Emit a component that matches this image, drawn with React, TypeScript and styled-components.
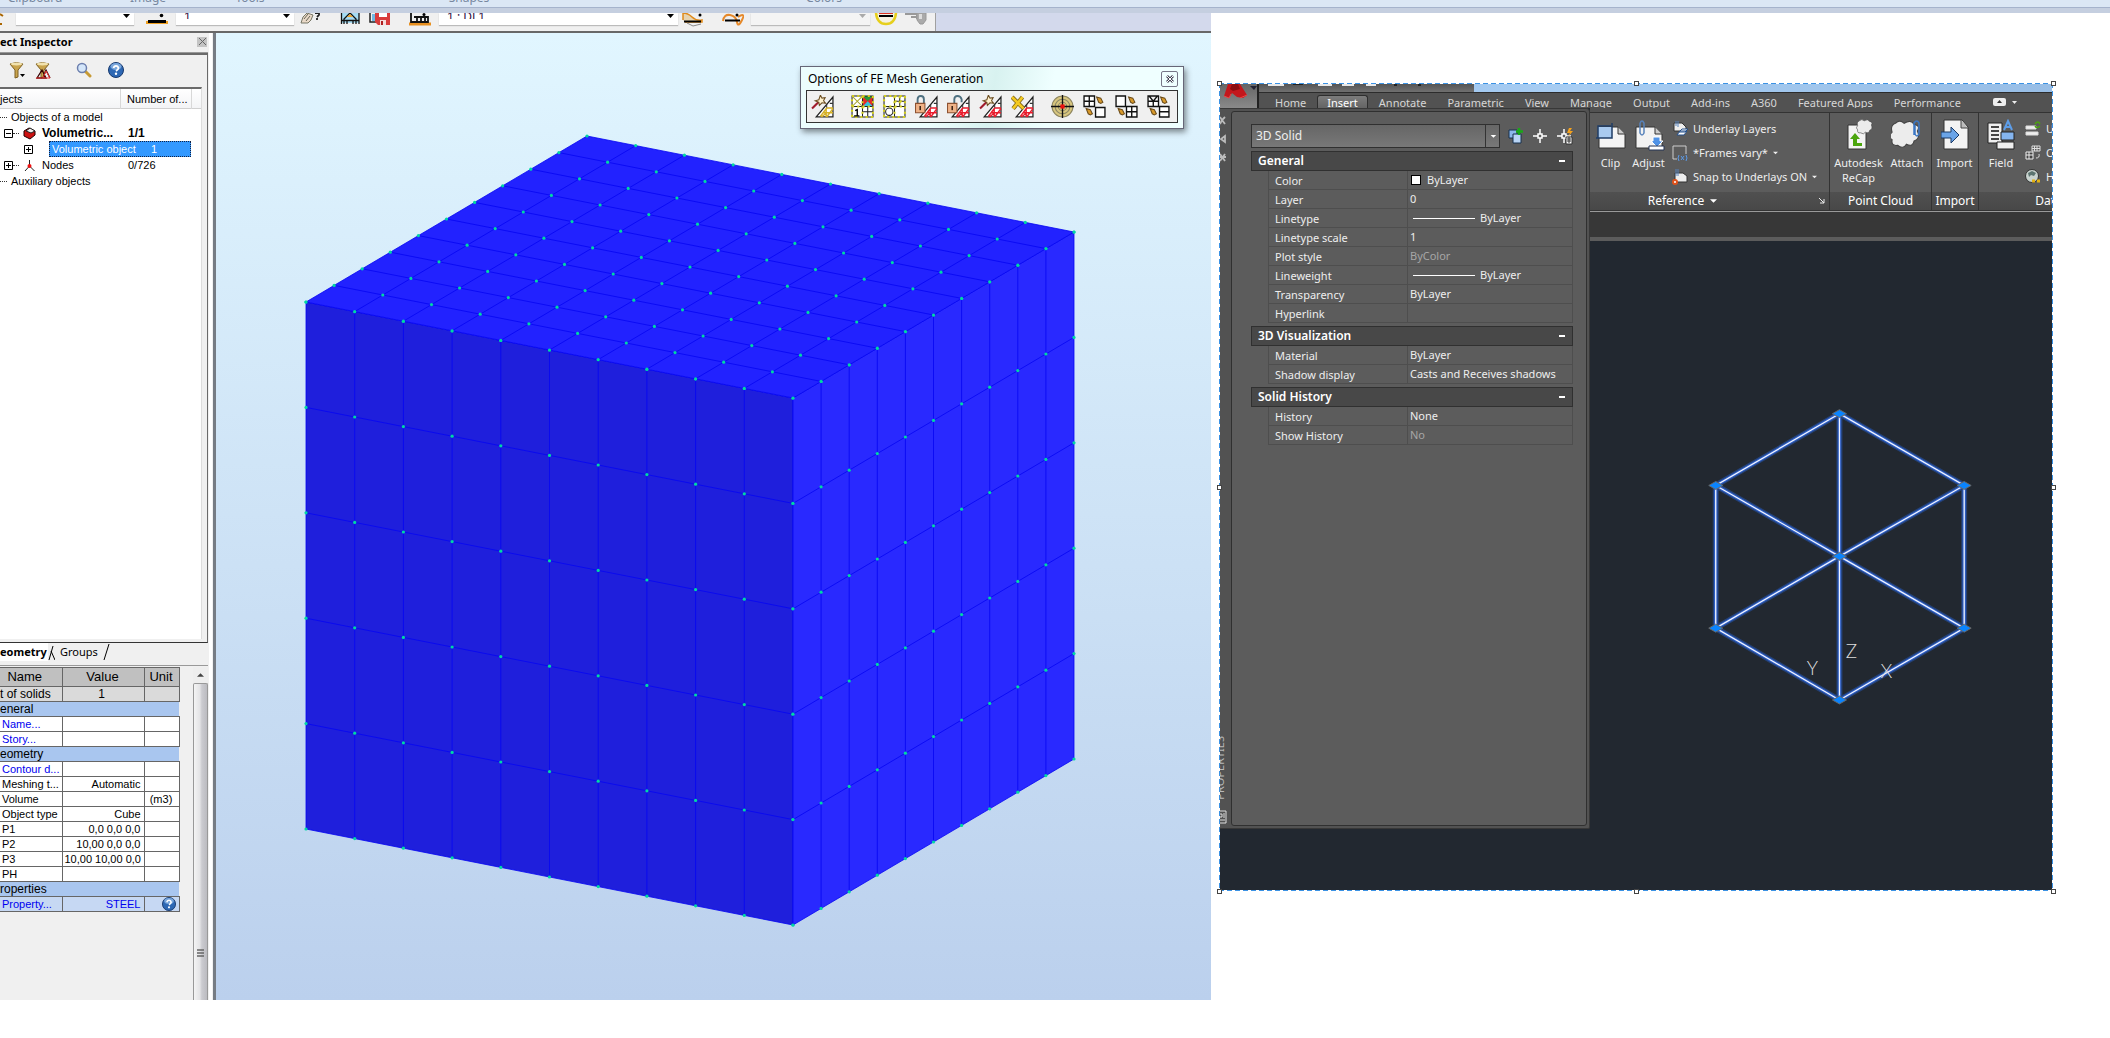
import React from "react";
import styled, { createGlobalStyle, css } from "styled-components";

const ui = `"Noto Sans", "Open Sans", sans-serif`;
const arial = `"Liberation Sans", Arial, sans-serif`;

const GlobalStyle = createGlobalStyle`
  * { box-sizing: border-box; }
  body { margin: 0; background: #fff; font: 11px/16px ${ui}; color: #000; }
  button, select, input { font: inherit; color: inherit; margin: 0; padding: 0; border: 0; background: none; }
  svg { display: block; flex: none; }
`;

const Page = styled.div`
  display: flex;
  flex-direction: column;
  height: 100vh;
  overflow: hidden;
`;

/* ---------- paint ribbon remains ---------- */
const PaintStrip = styled.header`
  display: flex;
  flex: none;
  align-items: flex-end;
  height: 13px;
  overflow: hidden;
  background: linear-gradient(#dbe7f5 0 7px, #a5b3cc 7px 8px, #c5cfe0 8px 13px);
`;
const PaintLabel = styled.span<{ $w: number }>`
  width: ${(p) => p.$w}px;
  padding-bottom: 7px;
  text-align: center;
  color: #7787a0;
  font-size: 12px;
`;

const Workspace = styled.main`
  display: grid;
  grid-template-columns: 1211fr 899fr;
  flex: 1;
  min-height: 0;
`;

/* ---------- structural window ---------- */
const RobotWindow = styled.section`
  display: flex;
  flex-direction: column;
  min-width: 0;
  margin-bottom: 38px;
  background: #f0f0f0;
`;
const LoadBar = styled.div`
  display: flex;
  align-items: flex-start;
  flex: none;
  height: 20px;
  overflow: hidden;
  border-bottom: 2px solid #686868;
  background: #f0f0f0;
`;
const LoadFiller = styled.div`
  flex: 1;
  height: 100%;
  border-left: 1px solid #a0a0a0;
  background: #d3d9ec;
`;
const Spacer = styled.span<{ $w: number }>`
  flex: none;
  width: ${(p) => p.$w}px;
`;
const ComboWrap = styled.div<{ $w: number; $off?: boolean }>`
  display: flex;
  flex: none;
  align-items: flex-end;
  width: ${(p) => p.$w}px;
  height: 12px;
  overflow: hidden;
  background: ${(p) => (p.$off ? "#f4f4f4" : "#fff")};
  box-shadow: 0 1px 1px #bbb;
  select {
    flex: 1;
    height: 16px;
    padding-left: 8px;
    padding-bottom: 6px;
    line-height: 16px;
    font-size: 12px;
    appearance: none;
    overflow: visible;
    color: ${(p) => (p.$off ? "#aaa" : "#301040")};
  }
`;
const RobotBody = styled.div`
  display: flex;
  flex: 1;
  min-height: 0;
`;
const SidePane = styled.aside`
  display: flex;
  flex-direction: column;
  flex: none;
  width: 213px;
  padding-right: 5px;
  background: linear-gradient(90deg, #f0f0f0 209px, #fff 209px 212px, #f0f0f0 212px);
`;
const PaneTitle = styled.div`
  display: flex;
  align-items: center;
  justify-content: space-between;
  flex: none;
  height: 20px;
  padding-right: 1px;
  padding-bottom: 2px;
  border-bottom: 1px solid #999;
  font-weight: 700;
`;
const PaneClose = styled.button`
  display: grid;
  place-items: center;
  width: 10px;
  height: 10px;
  background: #c4c4c4;
`;
const TreeFrame = styled.div`
  display: flex;
  flex-direction: column;
  flex: none;
  height: 590px;
  padding-right: 5px;
  border-top: 2px solid #6a6a6a;
  border-right: 1px solid #6a6a6a;
  border-bottom: 1px solid #333;
`;
const FilterBar = styled.div`
  display: flex;
  align-items: center;
  flex: none;
  height: 32px;
  padding-left: 9px;
  padding-bottom: 2px;
`;
const IconButton = styled.button<{ $w: number }>`
  display: block;
  flex: none;
  width: ${(p) => p.$w}px;
`;
const Tree = styled.div`
  flex: 1;
  margin-bottom: 3px;
  border-top: 2px solid #6a6a6a;
  border-right: 1px solid #ddd;
  background: #fff;
  font: 12px/16px ${arial};
`;
const TreeHead = styled.div`
  display: grid;
  grid-template-columns: 121px 71px 1fr;
  height: 20px;
  border-bottom: 1px solid #d0d0d0;
  background: linear-gradient(#fff, #f3f4f6);
  line-height: 20px;
  white-space: nowrap;
  font-size: 11px;
  span { border-right: 1px solid #d8d8d8; }
  span + span { padding-left: 6px; }
  span:last-child { border: 0; }
`;
const TreeRow = styled.div<{ $bold?: boolean }>`
  display: grid;
  grid-template-columns: 128px 1fr;
  height: 16px;
  line-height: 16px;
  font-size: ${(p) => (p.$bold ? 12 : 11)}px;
  font-weight: ${(p) => (p.$bold ? 700 : 400)};
`;
const TreeCell = styled.span`
  display: flex;
  align-items: center;
  white-space: nowrap;
`;
const Dots = styled.i<{ $w: number }>`
  flex: none;
  width: ${(p) => p.$w}px;
  margin-right: 4px;
  border-top: 1px dotted #333;
`;
const TreePicked = styled.div`
  display: grid;
  grid-template-columns: 24px 25px 142px;
  align-items: center;
  height: 16px;
  font-size: 11px;
`;
const Picked = styled.span`
  display: grid;
  grid-template-columns: 99px 1fr;
  padding-left: 2px;
  border: 1px dotted #124;
  background: #3399ff;
  color: #fff;
  line-height: 14px;
  white-space: nowrap;
`;
const PaneTabs = styled.div`
  display: flex;
  flex: none;
  align-items: center;
  height: 23px;
  padding-bottom: 4px;
  border-bottom: 1px solid #999;
  button { line-height: 18px; }
  button:first-child { width: 48px; padding-right: 4px; font-weight: 700; text-align: left; background: #fff; white-space: nowrap; }
  button:last-of-type { padding: 0 5px; }
`;
const PropsArea = styled.div`
  display: flex;
  flex: 1;
  min-height: 0;
  padding-top: 1px;
  justify-content: space-between;
`;
type Kind = "plain" | "link" | "pick" | "count";
const PropsTable = styled.table`
  align-self: flex-start;
  width: 179px;
  border-collapse: collapse;
  table-layout: fixed;
  font: 11px/14px ${arial};
  td, th { height: 15px; padding: 0 3px 0 2px; border: 1px solid #666; border-left: 0; white-space: nowrap; overflow: hidden; }
  th { height: 19px; background: #c0c0c0; font-size: 13px; font-weight: 400; }
  th:first-child { padding-right: 14px; }
`;
const PropsRow = styled.tr<{ $kind: Kind }>`
  background: ${(p) => (p.$kind === "pick" ? "#c6d8f3" : p.$kind === "count" ? "#dadada" : "#fff")};
  color: ${(p) => (p.$kind === "link" || p.$kind === "pick" ? "#0000f0" : "#000")};
  td:nth-child(2) { text-align: right; }
  td:nth-child(3) { text-align: center; }
  td svg { margin-left: auto; }
  ${(p) => p.$kind === "count" && css`td { font-size: 12px; padding-left: 0; } td:nth-child(2) { text-align: center; }`}
`;
const BandCell = styled.td`
  && { padding-left: 0; border-right: 0; background: #a9c6ef; font-size: 12px; text-align: left; }
`;
const Scroll = styled.div`
  display: flex;
  flex-direction: column;
  width: 15px;
  background: #eee;
`;
const ScrollUp = styled.button`
  display: grid;
  place-items: center;
  height: 16px;
`;
const Thumb = styled.div`
  display: flex;
  flex: 1;
  align-items: center;
  justify-content: center;
  padding-top: 222px;
  border: solid #999;
  border-width: 1px 1px 0;
  border-radius: 2px 2px 0 0;
  background: linear-gradient(90deg, #f4f4f4, #e4e4e6 45%, #cbcbd0 60%, #bbbbc0);
`;

const Viewport = styled.div`
  position: relative;
  flex: 1;
  min-width: 0;
  border-left: 3px solid #767c84;
  background: linear-gradient(#e1f6ff, #ddf2fd 10%, #bbd0ed);
  > svg { width: 100%; height: 100%; }
`;
const MeshPanel = styled.div`
  position: absolute;
  top: 33px;
  right: 27px;
  width: 384px;
  height: 63px;
  padding: 0 5px;
  border: 1px solid #667;
  background: linear-gradient(100deg, #ecfdfd 35%, #d8f2f0 50%, #efffff 65%);
  box-shadow: 2px 3px 6px rgba(0, 0, 0, 0.45);
`;
const MeshTitle = styled.div`
  display: flex;
  align-items: center;
  justify-content: space-between;
  height: 23px;
  padding-left: 2px;
  font-size: 12px;
  button { display: grid; place-items: center; width: 17px; height: 16px; border: 1px solid #778; border-radius: 2px; }
`;
const MeshTools = styled.div`
  display: flex;
  align-items: center;
  gap: 8px;
  height: 33px;
  padding-left: 4px;
  border: 1px solid #333;
  background: #f0f0f0;
  button { width: 24px; }
  button.gap { margin-left: 8px; }
`;

/* ---------- drafting window ---------- */
const Selection = styled.section`
  position: relative;
  display: flex;
  margin: 70px 57px 147px 8px;
  padding: 1px;
  min-width: 0;
  background:
    repeating-linear-gradient(90deg, #3b92e4 0 5px, #fff 5px 8px) top / 100% 1px no-repeat,
    repeating-linear-gradient(90deg, #3b92e4 0 5px, #fff 5px 8px) bottom / 100% 1px no-repeat,
    repeating-linear-gradient(#3b92e4 0 5px, #fff 5px 8px) left / 1px 100% no-repeat,
    repeating-linear-gradient(#3b92e4 0 5px, #fff 5px 8px) right / 1px 100% no-repeat;
`;
const Grip = styled.i<{ $x: number; $y: number }>`
  position: absolute;
  z-index: 3;
  left: ${(p) => p.$x}%;
  top: ${(p) => p.$y}%;
  width: 5px;
  height: 5px;
  margin: -2px;
  border: 1px solid #444;
  background: #fff;
`;
const CadWindow = styled.div`
  display: grid;
  grid-template: "top top" auto "palette draw" 1fr / 370px 1fr;
  flex: 1;
  min-width: 0;
  overflow: hidden;
  background: #222830;
  color: #eee;
`;
const CadTop = styled.div`
  grid-area: top;
  display: flex;
  height: 24px;
  background: #525252;
`;
const AppButton = styled.button`
  display: flex;
  flex: none;
  align-items: flex-start;
  width: 39px;
  height: 24px;
  border-right: 2px solid #222;
  background: linear-gradient(#666, #8a8a8a);
`;
const CadTopRight = styled.div`
  display: flex;
  flex-direction: column;
  flex: 1;
  min-width: 0;
`;
const TitleStrip = styled.div`
  display: flex;
  flex: none;
  height: 9px;
  overflow: hidden;
  border-bottom: 1px solid #2c2c2c;
  background: linear-gradient(90deg, #9bc3ee, #a8cdf2 40%, #98bee6);
`;
const QuickBar = styled.div`
  display: flex;
  align-items: flex-start;
  width: 215px;
  padding-left: 9px;
  background: linear-gradient(#555, #707070);
`;
const Tabs = styled.nav`
  display: flex;
  align-items: flex-end;
  gap: 1px;
  height: 15px;
  padding-left: 6px;
`;
const Tab = styled.button<{ $on?: boolean }>`
  flex: none;
  height: 13px;
  padding: 0 9px;
  border: solid ${(p) => (p.$on ? "#2e2e2e" : "transparent")};
  border-width: 1px 1px 0;
  border-radius: 3px 3px 0 0;
  background: ${(p) => (p.$on ? "linear-gradient(#7c7c7c, #646464)" : "none")};
  color: ${(p) => (p.$on ? "#fff" : "#d6d6d6")};
  line-height: 14px;
`;

const Palette = styled.aside`
  grid-area: palette;
  display: flex;
  align-self: start;
  height: 721px;
  padding: 2px 2px 2px 0;
  border: solid #383838;
  border-width: 1px 1px 1px 0;
  border-radius: 0 4px 2px 0;
  background: #525252;
`;
const Rail = styled.div`
  display: flex;
  flex-direction: column;
  flex: none;
  width: 11px;
  overflow: hidden;
  color: #ccc;
`;
const RailText = styled.span`
  margin-top: auto;
  margin-bottom: 10px;
  width: 0;
  line-height: 0;
  writing-mode: vertical-rl;
  transform: rotate(180deg);
  font-size: 11px;
  color: #b8b8b8;
`;
const PaletteBody = styled.div`
  flex: 1;
  padding: 12px 13px 0 19px;
  border: 1px solid #303030;
  border-radius: 3px;
  background: #5c5c5c;
`;
const Picker = styled.div`
  display: flex;
  align-items: center;
  margin-bottom: 3px;
`;
const PickerBox = styled.label`
  display: flex;
  align-items: center;
  flex: 1;
  height: 24px;
  margin-right: 8px;
  border: 1px solid #303030;
  background: linear-gradient(#666, #787878);
  select { flex: 1; height: 22px; padding-left: 4px; appearance: none; font-size: 12px; }
  svg { width: 14px; height: 22px; border-left: 1px solid #333; }
`;
const GroupHead = styled.h3`
  display: flex;
  align-items: center;
  justify-content: space-between;
  height: 20px;
  margin: 0;
  padding: 0 7px 0 6px;
  border: 1px solid #303030;
  background: #484848;
  font-size: 12px;
  font-weight: 600;
  color: #fff;
  button { width: 6px; height: 2px; background: #fff; }
`;
const Fields = styled.dl`
  display: grid;
  grid-template-columns: 139px 1fr;
  margin: 0 0 3px 17px;
  dt, dd { display: flex; align-items: center; height: 19px; margin: 0; border: solid #4e4e4e; border-width: 0 0 1px 1px; white-space: nowrap; }
  dt { padding-left: 6px; padding-top: 1px; }
  dd { padding-left: 2px; border-right-width: 1px; }
`;
const Muted = styled.span`
  color: #a6a6a6;
`;
const Swatch = styled.i`
  width: 10px;
  height: 10px;
  margin: 0 6px 0 1px;
  border: 1px solid #000;
  background: #fff;
`;
const Stroke = styled.i`
  width: 62px;
  height: 1px;
  margin: 0 5px 0 3px;
  background: #fff;
`;

const DrawColumn = styled.div`
  grid-area: draw;
  display: flex;
  flex-direction: column;
  min-width: 0;
`;
const Ribbon = styled.div`
  display: flex;
  flex: none;
  height: 104px;
  padding-top: 4px;
  overflow: hidden;
  border-bottom: 1px solid #999;
  background: #525252;
`;
const RibbonPanel = styled.section<{ $w: number }>`
  display: flex;
  flex-direction: column;
  flex: none;
  width: ${(p) => p.$w}px;
  border: solid #333;
  border-width: 1px 1px 1px 0;
  background: #5c5c5c;
`;
const PanelBody = styled.div`
  display: flex;
  flex: 1;
  padding: 6px 2px 0 2px;
`;
const PanelFoot = styled.footer`
  display: flex;
  align-items: center;
  justify-content: center;
  height: 18px;
  padding-right: 4px;
  background: linear-gradient(#505050, #484848);
  font-size: 12px;
  color: #fff;
  white-space: nowrap;
`;
const PlainFoot = styled(PanelFoot)`
  padding: 0;
`;
const FootTitle = styled.span`
  display: flex;
  flex: 1;
  align-items: center;
  justify-content: center;
  gap: 6px;
  padding-right: 44px;
`;
const BigTool = styled.button<{ $w: number }>`
  display: flex;
  flex-direction: column;
  align-items: center;
  flex: none;
  width: ${(p) => p.$w}px;
  line-height: 15px;
  svg { margin-bottom: 4px; }
`;
const SmallTools = styled.div`
  display: flex;
  flex-direction: column;
  gap: 8px;
  padding: 2px 0 0 4px;
`;
const SmallTool = styled.button`
  display: flex;
  align-items: center;
  gap: 5px;
  height: 16px;
  white-space: nowrap;
`;
const FileTabs = styled.div`
  flex: none;
  height: 29px;
  border-bottom: 4px solid #5c5c5c;
  background: #373737;
`;
const Drawing = styled.div`
  flex: 1;
  min-height: 0;
  svg { width: 100%; height: 100%; }
`;

/* ---------- icons ---------- */
const Caret = ({ c = "#000", w = 7 }: { c?: string; w?: number }) => (
  <svg width={w} height="4" viewBox="0 0 8 4"><path d="M0 0h8L4 4z" fill={c} /></svg>
);
const Funnel = ({ mesh }: { mesh?: boolean }) => (
  <svg width="16" height="17" viewBox="0 0 16 17">
    <path d="M1 2q6-3 13 0L9 8v7l-3 1V8z" fill="#c9a44d" stroke="#7d5f22" />
    <ellipse cx="7.500" cy="2" rx="6" ry="1.500" fill="#f1e2ae" />
    {mesh ? <path d="M2 16l5-8 4 8zM8 16l3-8 4 8" fill="none" stroke="#300" strokeWidth="1.300" /> : <path d="M11 12h5l-2.500 3z" />}
    {mesh && <path d="M8 16l3-7 4 7M1 16h14" fill="none" stroke="#e33" />}
  </svg>
);
const Help = ({ s = 16 }: { s?: number }) => (
  <svg width={s} height={s} viewBox="0 0 16 16">
    <circle cx="8" cy="8" r="7.500" fill="#2e68b4" stroke="#17386c" />
    <ellipse cx="8" cy="4.500" rx="5.500" ry="3.500" fill="#7aa7dc" />
    <path d="M5.500 6Q6 3.800 8 3.800T10.500 6Q10.500 7.300 8 9" fill="none" stroke="#fff" strokeWidth="1.800" />
    <circle cx="8" cy="11.800" r="1.200" fill="#fff" />
  </svg>
);
const Magnifier = () => (
  <svg width="16" height="16" viewBox="0 0 16 16">
    <path d="M9 9l5 5" stroke="#c79a35" strokeWidth="3" strokeLinecap="round" />
    <circle cx="6" cy="6" r="4.500" fill="#d4e6fa" stroke="#6c7fae" strokeWidth="1.500" />
  </svg>
);
const Expander = ({ plus }: { plus?: boolean }) => (
  <svg width="9" height="9" viewBox="0 0 9 9">
    <path d={plus ? "M.5.5h8v8h-8zM2 4.500h5M4.500 2v5" : "M.5.5h8v8h-8zM2 4.500h5"} fill="#fff" stroke="#000" />
  </svg>
);
const Beam = ({ kind }: { kind: string }) => (
  <svg width="22" height="14" viewBox="0 0 22 14">
    {kind === "bar" && <><path d="M0 9.500h22" stroke="#f0a020" strokeWidth="3" /><path d="M2 8.500h18" stroke="#000" strokeWidth="3" /><circle cx="15.500" cy="2.500" r="1.800" /></>}
    {kind === "hand" && <><path d="M1 10L3 4l4-4 3 1 3 1-2 5-3 3z" fill="#ead9c8" stroke="#776" /><path d="M4 6l4-5M6 8l4-5" stroke="#665" /><path d="M15 0h4v2l-2 2M17 5v2" stroke="#222" strokeWidth="1.800" fill="none" /></>}
    {kind === "node" && <><path d="M2 0h18v10H2z" fill="#a5dbf3" /><path d="M2.500 0v11M20 0v11M5 11V6l6-6 6 6v5M2 7.500h18M8 11V8M14 11V8" stroke="#111" strokeWidth="1.300" fill="none" /><path d="M8 4l3-3 3 3z" fill="#f3a52b" /></>}
    {kind === "save" && <><path d="M1 0v9h6V0" fill="none" stroke="#222" strokeWidth="1.500" /><path d="M3 1h3v7H3z" fill="#6fb8e4" /><path d="M6 0h15v12H9L6 9z" fill="#d93c3c" /><path d="M10 0h8v4h-8z" fill="#fff" /><path d="M11 7h6v5h-6z" fill="#f3dcdc" /><path d="M12 8h2v4h-2z" fill="#b02020" /></>}
    {kind === "load" && <><path d="M0 11h22" stroke="#e89020" strokeWidth="3" /><path d="M2 0v9h17V4H5M8 4v5M12 4v5M16 4v5" stroke="#111" strokeWidth="1.800" fill="none" /><circle cx="15" cy="1.500" r="1.500" /></>}
    {kind === "curveA" && <><path d="M1 7V0Q6 0 10 4t10 3v2H3" fill="#e6d3b0" stroke="#e08a1a" strokeWidth="1.500" /><path d="M2 8.500h17" stroke="#000" strokeWidth="2" /><path d="M5 10l6 3 8-2" stroke="#888" fill="none" /><circle cx="18" cy="2" r="1.500" /></>}
    {kind === "curveB" && <><path d="M1 8Q2 1 8 2t7 7 5-2-4-3" fill="none" stroke="#e6892a" strokeWidth="2" /><path d="M3 7.500h15" stroke="#000" strokeWidth="2" /><circle cx="15" cy="2" r="1.500" /></>}
  </svg>
);
const Ring = () => (
  <svg width="24" height="14" viewBox="0 0 24 14">
    <path d="M2 0Q3 11 12 11T22 0" fill="#f5f1e0" stroke="#e6cf1c" strokeWidth="2.500" /><path d="M5 0h14" stroke="#d32" strokeWidth="2" /><path d="M5 3h14" stroke="#000" strokeWidth="2" />
  </svg>
);
const Plug = () => (
  <svg width="24" height="14" viewBox="0 0 24 14"><path d="M0 1h12v3H6M12 0v6" fill="none" stroke="#999" strokeWidth="2" /><path d="M12 0h9v7l-3 4h-3l-3-4z" fill="#aaa" stroke="#999" /><path d="M14 1h3v5h-3z" fill="#ddd" /></svg>
);

const Tri = ({ c }: { c: string }) => (
  <g fill="none">
    <path d="M5 21L21 2V21z" fill="#fff" stroke="#222" strokeWidth="1.200" />
    <path d="M9 20.500l6-8h6M14.500 13v8M12 17h9M15 21l6-8M10 21l5-4" stroke={c} strokeWidth="1.400" />
    <path d="M15 12V9M18 8h3" stroke="#333" />
  </g>
);
const Wand = () => (
  <g><path d="M1 13l7-7" stroke="#a11c2c" strokeWidth="2" /><path d="M9 0l1.500 3 3-.5-1.500 3 2 2.500-3.500-.5L8 10l-.5-3L4 5.500l3.500-1z" fill="#fff2cf" stroke="#6b4d21" /></g>
);
const Lock = ({ open }: { open?: boolean }) => (
  <g><path d={open ? "M7 8V4Q7 1 10 1t4 3v3" : "M2.500 8V4Q2.500 1 5.500 1T8.500 4v4"} fill="none" stroke="#4e7080" strokeWidth="1.800" /><path d="M.5 8h9v9h-9z" fill="#efb287" stroke="#8d5130" /><path d="M5 10.500v4" stroke="#3d2414" strokeWidth="1.500" /></g>
);
const Arrows = () => (
  <g fill="#d99a2b" stroke="#694a18"><path d="M13 2l4 1 2 4-2 1-2-1z" /><path d="M3 13l4 1 2 4-2 1-2-1z" /></g>
);
const MeshIcon = ({ kind }: { kind: string }) => (
  <svg width="23" height="23" viewBox="0 0 22 22">
    {kind === "wand" && <><Tri c="#d6b126" /><Wand /></>}
    {kind === "wandRed" && <><Tri c="#e81c2c" /><Wand /></>}
    {kind === "lock" && <><Tri c="#e81c2c" /><Lock /></>}
    {kind === "unlock" && <><Tri c="#e81c2c" /><Lock open /></>}
    {kind === "cross" && <><Tri c="#e81c2c" /><path d="M1 2l11 11M11 2L2 13" stroke="#80671a" strokeWidth="4" /><path d="M1 2l11 11M11 2L2 13" stroke="#f4c91f" strokeWidth="2.500" /></>}
    {kind === "quad" && <><path d="M1 1h20v20H1z" fill="#fff" /><path d="M11 1h10v10H11z" fill="#e42a2a" /><path d="M11 1h10l-5 5z" fill="#239a3b" /><path d="M16 6l5 5H11z" fill="#35c3dd" /><path d="M1 1h20v20H1zM11 1v20M1 11h20M16 11v10M11 16h10" fill="none" stroke="#222" /><path d="M1 1l10 10M11 1L1 11" stroke="#a8a32a" /><path d="M1 1h20v20H1zM1 11h20M11 1v20" fill="none" stroke="#d4cf1e" strokeWidth="2" strokeDasharray="2 3" /><path d="M4 15l2-1v6M3 20h5" fill="none" stroke="#000" strokeWidth="1.300" /></>}
    {kind === "quadEmpty" && <><path d="M1 1h20v20H1z" fill="#fff" /><path d="M1 1h20v20H1zM11 1v20M1 11h20M16 1v10M11 6h10" fill="none" stroke="#222" /><circle cx="6" cy="16" r="3.500" fill="none" stroke="#222" /><path d="M1 11V1h20v20H1V11h20M11 1v20M16 1v10M11 6h10" fill="none" stroke="#d4cf1e" strokeWidth="2" strokeDasharray="2 3" /></>}
    {kind === "target" && <><circle cx="11" cy="11" r="10" fill="#d8c67e" stroke="#8d8560" /><circle cx="11" cy="11" r="7" fill="none" stroke="#8b8768" /><circle cx="11" cy="11" r="4" fill="none" stroke="#8b8768" /><path d="M11 0v22M0 11h22" stroke="#111" strokeWidth="1.300" /><path d="M9 9h4v4H9z" fill="#e11" /></>}
    {kind === "toBlank" && <><path d="M1 1h10v10H1zM6 1v10M1 6h10M12 12h9v9h-9z" fill="#fff" stroke="#111" strokeWidth="1.300" /><Arrows /></>}
    {kind === "toGrid" && <><path d="M1 1h9v10H1zM11 11h10v10H11zM16 11v10M11 16h10" fill="#fff" stroke="#111" strokeWidth="1.300" /><Arrows /></>}
    {kind === "toHalf" && <><path d="M1 1h10v10H1zM6 6v5M1 6h10M2 1l4 5 4-5M12 11h9v10h-9zM12 16h9" fill="#fff" stroke="#111" strokeWidth="1.300" /><Arrows /></>}
  </svg>
);

const Sheet = ({ children, w = 28 }: { children?: React.ReactNode; w?: number }) => (
  <svg width={w} height="32" viewBox="0 0 28 32">{children}</svg>
);
const ClipIcon = () => (
  <svg width="32" height="32" viewBox="0 0 32 32"><path d="M4 8h19l7 7v14H4z" fill="#f4f4f4" stroke="#333" /><path d="M23 8v7h7" fill="#ccc" stroke="#333" /><path d="M3 8h14v11H3z" fill="#a9caef" /><path d="M3 19V7h13M1 19h16V4" fill="none" stroke="#1f3d66" strokeWidth="1.500" /></svg>
);
const AdjustIcon = () => (
  <svg width="32" height="32" viewBox="0 0 32 32"><path d="M3 8h19l7 7v14H3z" fill="#f2f2f2" stroke="#333" /><path d="M22 8v7h7" fill="#ccc" stroke="#333" /><path d="M7 4v10q2 4 4 0V4q-2-4-4 0" fill="none" stroke="#5782bb" strokeWidth="1.500" /><path d="M20 18h7v4h3l-6 6-6-6h2z" fill="#4f92e6" stroke="#fff" /><path d="M16 27h15v4H16z" fill="#fff" stroke="#235" /></svg>
);
const Cloud = ({ x, y, k }: { x: number; y: number; k: number }) => (
  <path transform={`translate(${x} ${y}) scale(${k})`} d="M4 3q4-4 8 0 6-4 9 1 6 1 3 6 3 7-3 9-1 6-7 3-3 5-8 1-6 1-5-5-4-3 0-7-2-6 3-8z" fill="#ececec" stroke="#444" />
);
const RecapIcon = () => (
  <Sheet><path d="M3 6h18v24H3z" fill="#f3f3f3" stroke="#333" /><Cloud x={12} y={0} k={0.6} /><path d="M10 14l-5 6h3v7h9v-3h-5v-4h3z" fill="#4ba50d" /></Sheet>
);
const AttachIcon = () => (
  <svg width="32" height="32" viewBox="0 0 32 32"><Cloud x={0} y={1} k={1.1} /><path d="M24 6v9q2 4 4 0V4q-2-4-5 0v12" fill="none" stroke="#3a76c4" strokeWidth="1.500" /></svg>
);
const ImportIcon = () => (
  <Sheet><path d="M3 1h18l6 7v22H3z" fill="#f3f3f3" stroke="#333" /><path d="M20 1v8h7" fill="#bbb" stroke="#444" /><path d="M0 13h10V8l8 8-8 8v-5H0z" fill="#6aa4e8" stroke="#1b3a66" /></Sheet>
);
const FieldIcon = () => (
  <Sheet><path d="M1 4h14v20H1z" fill="#eee" stroke="#222" /><path d="M4 8h8M4 12h8M4 16h8M4 20h8" stroke="#444" strokeWidth="2" /><path d="M14 13h13v8H14z" fill="#85b5ef" stroke="#222" /><path d="M10 23h17v7H10z" fill="#eee" stroke="#222" /><path d="M17 11l4-9 4 9M18.500 8h5" fill="none" stroke="#5d9de8" strokeWidth="2" /></Sheet>
);
const SmallIcon = ({ kind }: { kind: string }) => (
  <svg width="16" height="16" viewBox="0 0 16 16">
    {kind === "layers" && <><path d="M2 2h8l4 4v4H2z" fill="#eee" stroke="#333" /><path d="M4 0v5M6 0v6" stroke="#5782bb" /><path d="M5 14l3-4h7l-3 4zM7 11l3-3h6l-3 3z" fill="#fff" stroke="#24508c" /></>}
    {kind === "frames" && <><path d="M5 14H1V1h13v8" fill="none" stroke="#ccc" /><path d="M9 11l3 4M12 11l-3 4M7 10q-2 3 0 6M14 10q2 3 0 6" stroke="#5b9ae8" fill="none" /></>}
    {kind === "snap" && <><path d="M3 4h8l4 3v6H3z" fill="#eee" stroke="#333" /><path d="M4 0v7M6 0v7" stroke="#5782bb" /><circle cx="3" cy="13" r="2" fill="#fff" stroke="#e0521b" strokeWidth="2" /></>}
    {kind === "update" && <><path d="M1 5h10v3H1zM1 11h12v3H1z" fill="#eee" stroke="#ddd" /><path d="M10 3q3-4 5 0M15 5q-3 3-5 0" stroke="#4ba50d" strokeWidth="1.500" fill="none" /></>}
    {kind === "ole" && <><path d="M7 1h8v5H7zM9.500 1v5M12 1v5M7 3.500h8" fill="none" stroke="#ddd" /><path d="M1 7h7v7H1zM4 7v7M1 10h7" fill="#444" stroke="#eee" /><path d="M11 13q4 0 3-4" stroke="#ddd" fill="none" /></>}
    {kind === "hyper" && <><circle cx="7" cy="7" r="6.500" fill="#c9d3cf" stroke="#333" /><path d="M3 4l4-2 4 2-2 3-3-1-2 2z" fill="#5b7470" /><path d="M7 12h3M12 12h3" stroke="#e3b215" strokeWidth="3" /></>}
  </svg>
);
const PaletteTool = ({ kind }: { kind: string }) => (
  <svg width="16" height="18" viewBox="0 0 16 18">
    {kind === "add" && <><path d="M1 3h8v8H1z" fill="#8bb7ea" stroke="#16304f" /><path d="M5 7h8v9H5z" fill="#b9d5f5" stroke="#16304f" /><path d="M11 1v7M8 4.500h7" stroke="#18a818" strokeWidth="2.500" /></>}
    {kind !== "add" && <path d="M0 9h5M9 9h5M7 2v5M7 11v5M5 7h4v4H5z" fill="none" stroke="#fff" strokeWidth="1.500" />}
    {kind === "quick" && <><path d="M12 1l-2 5h3l-2 4 5-6h-3l2-3z" fill="#f6a21c" /><path d="M9 10h6v7H9z" fill="#fff" stroke="#333" /><path d="M10 12h4M10 14h4M12 10v6" stroke="#333" /></>}
  </svg>
);

/* ---------- drawings ---------- */
type Pt = [number, number];
const BACK: Pt = [587, 136];
const RIGHT: Pt = [1074, 232];
const LEFT: Pt = [306, 302];
const FRONT: Pt = [793, 398];
const DEPTH = 527;

function Face({ o, u, v, nu, nv, fill }: { o: Pt; u: Pt; v: Pt; nu: number; nv: number; fill: string }) {
  const at = (a: number, b: number): Pt => [o[0] + u[0] * a + v[0] * b, o[1] + u[1] * a + v[1] * b];
  const seg = (p: Pt, q: Pt) => `M${p[0]} ${p[1]}L${q[0]} ${q[1]}`;
  let lines = "";
  const nodes: Pt[] = [];
  for (let i = 0; i <= nu; i++) lines += seg(at(i / nu, 0), at(i / nu, 1));
  for (let j = 0; j <= nv; j++) lines += seg(at(0, j / nv), at(1, j / nv));
  for (let i = 0; i <= nu; i++) for (let j = 0; j <= nv; j++) nodes.push(at(i / nu, j / nv));
  return (
    <g>
      <polygon points={[at(0, 0), at(1, 0), at(1, 1), at(0, 1)].join(" ")} fill={fill} />
      <path d={lines} stroke="#0505f2" strokeOpacity="0.8" fill="none" />
      {nodes.map(([x, y], k) => <circle key={k} cx={x} cy={y} r="1.600" fill="#00d8a4" />)}
    </g>
  );
}
const edge = (a: Pt, b: Pt): Pt => [b[0] - a[0], b[1] - a[1]];
const MeshCube = () => (
  <svg viewBox="216 33 995 967" preserveAspectRatio="xMinYMin meet">
    <Face o={LEFT} u={edge(LEFT, FRONT)} v={[0, DEPTH]} nu={10} nv={5} fill="#1f1fdc" />
    <Face o={FRONT} u={edge(FRONT, RIGHT)} v={[0, DEPTH]} nu={10} nv={5} fill="#2929ff" />
    <Face o={BACK} u={edge(BACK, RIGHT)} v={edge(BACK, LEFT)} nu={10} nv={10} fill="#2222ff" />
  </svg>
);
const HEX: Pt[] = [[1840, 414], [1965, 486], [1965, 629], [1840, 701], [1716, 629], [1716, 486]];
const CENTER: Pt = [1840, 557];
const wire = `M${HEX.join("L")}Z` + HEX.map((p) => `M${CENTER}L${p}`).join("");
const WireCube = () => (
  <svg viewBox="1590 241 463 650" preserveAspectRatio="xMidYMin meet">
    <path d={wire} fill="none" stroke="#2450a0" strokeWidth="6" opacity="0.6" />
    <path d={wire} fill="none" stroke="#2c5cc4" strokeWidth="3.500" />
    <path d={wire} fill="none" stroke="#eef3ff" strokeWidth="1.300" />
    {[...HEX, CENTER].map(([x, y]) => (
      <path key={`${x}-${y}`} d={`M${x - 7} ${y}L${x} ${y - 4}L${x + 7} ${y}L${x} ${y + 4}Z`} fill="#0a84ff" stroke="#666" />
    ))}
    <g fill="#ddd" fontFamily="Lato, sans-serif" fontWeight="300" fontSize="19" textAnchor="middle">
      <text x="1813" y="676">Y</text>
      <text x="1852" y="659">Z</text>
      <text x="1887" y="679">X</text>
    </g>
  </svg>
);

/* ---------- parts ---------- */
const Combo = ({ w, label, value, off }: { w: number; label: string; value: string; off?: boolean }) => (
  <ComboWrap $w={w} $off={off}>
    <select aria-label={label} disabled={off}><option>{value}</option></select>
    <svg width="12" height="12" viewBox="0 0 12 12"><path d="M1 1h7L4.500 5z" fill={off ? "#aaa" : "#000"} /></svg>
  </ComboWrap>
);

type PropLine = { name: string; value?: string; unit?: string; kind?: Kind; band?: boolean };
const PROPS: PropLine[] = [
  { name: "t of solids", value: "1", kind: "count" },
  { name: "eneral", band: true },
  { name: "Name...", kind: "link" },
  { name: "Story...", kind: "link" },
  { name: "eometry", band: true },
  { name: "Contour d...", kind: "link" },
  { name: "Meshing t...", value: "Automatic" },
  { name: "Volume", unit: "(m3)" },
  { name: "Object type", value: "Cube" },
  { name: "P1", value: "0,0 0,0 0,0" },
  { name: "P2", value: "10,00 0,0 0,0" },
  { name: "P3", value: "10,00 10,00 0,0" },
  { name: "PH" },
  { name: "roperties", band: true },
  { name: "Property...", value: "STEEL", kind: "pick" },
];

const TOOLS = ["wand", "quad", "quadEmpty", "lock", "unlock", "wandRed", "cross", "target", "toBlank", "toGrid", "toHalf"];
const TABS = ["Home", "Insert", "Annotate", "Parametric", "View", "Manage", "Output", "Add-ins", "A360", "Featured Apps", "Performance"];

const GROUPS: { title: string; rows: [string, React.ReactNode][] }[] = [
  {
    title: "General",
    rows: [
      ["Color", <><Swatch />ByLayer</>],
      ["Layer", "0"],
      ["Linetype", <><Stroke />ByLayer</>],
      ["Linetype scale", "1"],
      ["Plot style", <Muted>ByColor</Muted>],
      ["Lineweight", <><Stroke />ByLayer</>],
      ["Transparency", "ByLayer"],
      ["Hyperlink", ""],
    ],
  },
  { title: "3D Visualization", rows: [["Material", "ByLayer"], ["Shadow display", "Casts and Receives shadows"]] },
  { title: "Solid History", rows: [["History", "None"], ["Show History", <Muted>No</Muted>]] },
];

function Inspector() {
  return (
    <SidePane>
      <PaneTitle>
        <span>ect Inspector</span>
        <PaneClose aria-label="Close inspector"><svg width="7" height="7" viewBox="0 0 7 7"><path d="M0 0l7 7M7 0L0 7" stroke="#666" /></svg></PaneClose>
      </PaneTitle>
      <TreeFrame>
        <FilterBar>
          <IconButton $w={26} aria-label="Filter"><Funnel /></IconButton>
          <IconButton $w={41} aria-label="Filter mesh"><Funnel mesh /></IconButton>
          <IconButton $w={32} aria-label="Find"><Magnifier /></IconButton>
          <IconButton $w={16} aria-label="Help"><Help /></IconButton>
        </FilterBar>
        <Tree>
          <TreeHead><span>jects</span><span>Number of...</span><span /></TreeHead>
          <TreeRow><TreeCell><Dots $w={7} />Objects of a model</TreeCell></TreeRow>
          <TreeRow $bold>
            <TreeCell>
              <Spacer $w={4} /><Expander /><Dots $w={6} />
              <svg width="13" height="13" viewBox="0 0 13 13"><path d="M1 4l5-3 6 3v4l-5 4-6-3z" fill="#c11" stroke="#200" /><path d="M3 4l4-3 5 3-4 2z" fill="#eee" stroke="#222" /></svg>
              <Spacer $w={6} />Volumetric...
            </TreeCell>
            <span>1/1</span>
          </TreeRow>
          <TreePicked><span /><Expander plus /><Picked><span>Volumetric object</span><span>1</span></Picked></TreePicked>
          <TreeRow>
            <TreeCell>
              <Spacer $w={4} /><Expander plus /><Dots $w={6} />
              <svg width="13" height="13" viewBox="0 0 13 13"><path d="M6.500 1v6L2 12M6.500 7l5 5" fill="none" stroke="#222" /><circle cx="6.500" cy="7" r="2" fill="#e11" /></svg>
              <Spacer $w={6} />Nodes
            </TreeCell>
            <span>0/726</span>
          </TreeRow>
          <TreeRow><TreeCell><Dots $w={7} />Auxiliary objects</TreeCell></TreeRow>
        </Tree>
      </TreeFrame>
      <PaneTabs>
        <button>eometry</button>
        <svg width="7" height="15" viewBox="0 0 7 15"><path d="M1 15L5 1M3 6l4 9" stroke="#000" fill="none" /></svg>
        <button>Groups</button>
        <svg width="7" height="16" viewBox="0 0 7 16"><path d="M1 16L6 0" stroke="#000" fill="none" /></svg>
      </PaneTabs>
      <PropsArea>
        <PropsTable>
          <colgroup><col width="62" /><col width="82" /><col width="35" /></colgroup>
          <thead><tr><th>Name</th><th>Value</th><th>Unit</th></tr></thead>
          <tbody>
            {PROPS.map((p) => (
              <PropsRow key={p.name} $kind={p.kind ?? "plain"}>
                {p.band ? <BandCell colSpan={3}>{p.name}</BandCell> : (
                  <><td>{p.name}</td><td>{p.value}</td><td>{p.kind === "pick" ? <Help s={14} /> : p.unit}</td></>
                )}
              </PropsRow>
            ))}
          </tbody>
        </PropsTable>
        <Scroll>
          <ScrollUp aria-label="Scroll up"><svg width="7" height="4" viewBox="0 0 8 4"><path d="M0 4h8L4 0z" fill="#444" /></svg></ScrollUp>
          <Thumb><svg width="7" height="9" viewBox="0 0 7 9"><path d="M0 1h7M0 4h7M0 7h7" stroke="#666" strokeWidth="1.500" /></svg></Thumb>
        </Scroll>
      </PropsArea>
    </SidePane>
  );
}

function Robot() {
  return (
    <RobotWindow>
      <LoadBar>
        <svg width="16" height="14" viewBox="0 0 16 14"><path d="M0 1l3 2M0 11h2" stroke="#a60" strokeWidth="2" /></svg>
        <Combo w={118} label="Nodes" value="" />
        <Spacer $w={12} /><Beam kind="bar" /><Spacer $w={8} />
        <Combo w={118} label="Bars" value="1" />
        <Spacer $w={6} /><Beam kind="hand" /><Spacer $w={17} /><Beam kind="node" />
        <Spacer $w={8} /><Beam kind="save" /><Spacer $w={18} /><Beam kind="load" /><Spacer $w={8} />
        <Combo w={239} label="Load case" value="1 : DL1" />
        <Spacer $w={4} /><Beam kind="curveA" /><Spacer $w={18} /><Beam kind="curveB" /><Spacer $w={7} />
        <Combo w={119} label="Mode" value="" off />
        <Spacer $w={4} /><Ring /><Spacer $w={7} /><Plug /><Spacer $w={6} />
        <LoadFiller />
      </LoadBar>
      <RobotBody>
        <Inspector />
        <Viewport>
          <MeshCube />
          <MeshPanel>
            <MeshTitle>
              <span>Options of FE Mesh Generation</span>
              <button aria-label="Close options"><svg width="8" height="8" viewBox="0 0 8 8"><path d="M1 1l6 6M7 1L1 7" stroke="#445" strokeWidth="2.600" /><path d="M1 1l6 6M7 1L1 7" stroke="#fff" /></svg></button>
            </MeshTitle>
            <MeshTools>
              {TOOLS.map((t) => (
                <button key={t} aria-label={t} className={t === "quad" || t === "target" ? "gap" : undefined}><MeshIcon kind={t} /></button>
              ))}
            </MeshTools>
          </MeshPanel>
        </Viewport>
      </RobotBody>
    </RobotWindow>
  );
}

function PropertiesPalette() {
  return (
    <Palette>
      <Rail>
        <svg width="8" height="52" viewBox="0 0 8 52">
          <path d="M0 6l2 3-2 4M5 6L2 9l3 4M5 25l-4 3 4 3zM0 43l5 7M5 43l-5 7M0 46h6" stroke="#bbb" strokeWidth="1.800" fill="none" />
        </svg>
        <RailText>PROPERTIES</RailText>
        <svg width="7" height="16" viewBox="0 0 7 16"><path d="M0 1h6v12H0M0 10h5M4 3v5M0 7h2V4H0" fill="none" stroke="#ddd" /></svg>
      </Rail>
      <PaletteBody>
        <Picker>
          <PickerBox>
            <select aria-label="Selected object"><option>3D Solid</option></select>
            <svg viewBox="0 0 14 22"><path d="M5 10h6l-3 3z" fill="#fff" /></svg>
          </PickerBox>
          <IconButton $w={25} aria-label="Toggle PICKADD"><PaletteTool kind="add" /></IconButton>
          <IconButton $w={24} aria-label="Select objects"><PaletteTool kind="pick" /></IconButton>
          <IconButton $w={16} aria-label="Quick select"><PaletteTool kind="quick" /></IconButton>
        </Picker>
        {GROUPS.map((g) => (
          <React.Fragment key={g.title}>
            <GroupHead>{g.title}<button aria-label={`Collapse ${g.title}`} /></GroupHead>
            <Fields>
              {g.rows.map(([k, v]) => <React.Fragment key={k}><dt>{k}</dt><dd>{v}</dd></React.Fragment>)}
            </Fields>
          </React.Fragment>
        ))}
      </PaletteBody>
    </Palette>
  );
}

function CadRibbon() {
  return (
    <Ribbon>
      <RibbonPanel $w={240}>
        <PanelBody>
          <BigTool $w={37}><ClipIcon />Clip</BigTool>
          <BigTool $w={39}><AdjustIcon />Adjust</BigTool>
          <SmallTools>
            <SmallTool><SmallIcon kind="layers" />Underlay Layers</SmallTool>
            <SmallTool><SmallIcon kind="frames" />*Frames vary* <Caret c="#eee" w={5} /></SmallTool>
            <SmallTool><SmallIcon kind="snap" />Snap to Underlays ON <Caret c="#eee" w={5} /></SmallTool>
          </SmallTools>
        </PanelBody>
        <PanelFoot>
          <FootTitle>Reference <Caret c="#fff" /></FootTitle>
          <svg width="6" height="6" viewBox="0 0 6 6"><path d="M0 0l5 5M5 1v4H1" stroke="#eee" fill="none" /></svg>
        </PanelFoot>
      </RibbonPanel>
      <RibbonPanel $w={102}>
        <PanelBody>
          <BigTool $w={53}><RecapIcon />Autodesk<br />ReCap</BigTool>
          <BigTool $w={44}><AttachIcon />Attach</BigTool>
        </PanelBody>
        <PlainFoot>Point Cloud</PlainFoot>
      </RibbonPanel>
      <RibbonPanel $w={47}>
        <PanelBody><BigTool $w={41}><ImportIcon />Import</BigTool></PanelBody>
        <PlainFoot>Import</PlainFoot>
      </RibbonPanel>
      <RibbonPanel $w={140}>
        <PanelBody>
          <BigTool $w={40}><FieldIcon />Field</BigTool>
          <SmallTools>
            <SmallTool><SmallIcon kind="update" />Update Fields</SmallTool>
            <SmallTool><SmallIcon kind="ole" />OLE Object</SmallTool>
            <SmallTool><SmallIcon kind="hyper" />Hyperlink</SmallTool>
          </SmallTools>
        </PanelBody>
        <PlainFoot>Data</PlainFoot>
      </RibbonPanel>
    </Ribbon>
  );
}

function Cad() {
  return (
    <Selection>
      {[[0, 0], [50, 0], [100, 0], [0, 50], [100, 50], [0, 100], [50, 100], [100, 100]].map(([x, y]) => <Grip key={`${x}-${y}`} $x={x} $y={y} />)}
      <CadWindow>
        <CadTop>
          <AppButton aria-label="Application menu">
            <svg width="37" height="16" viewBox="0 0 37 16">
              <path d="M8 0h12l7 11-4 3-6-1-5-4-3 5-5-2z" fill="#c3171c" /><path d="M12 0h6l2 5-7 2-3-2z" fill="#8b0d12" /><path d="M4 12l5 2 2-4M27 11l-7 3" stroke="#e44" fill="none" />
              <path d="M30 2h7l-3 4z" fill="#223" />
            </svg>
          </AppButton>
          <CadTopRight>
            <TitleStrip>
              <QuickBar>
                <svg width="180" height="4" viewBox="0 0 180 4"><path d="M0 0h16v2H0zM50 0h14v2H50zM74 0h12v2H74zM98 0h10v2H98z" fill="#e8e8e8" /><path d="M25 0h10v1H25zM126 0h3v2h-3zM150 0h3v2h-3z" fill="#222" /></svg>
              </QuickBar>
            </TitleStrip>
            <Tabs>
              {TABS.map((t) => <Tab key={t} $on={t === "Insert"}>{t}</Tab>)}
              <Spacer $w={20} />
              <svg width="26" height="12" viewBox="0 0 26 12"><rect x="0" y="2" width="13" height="8" rx="2" fill="#eee" /><path d="M4 7h5L6.500 4z" fill="#333" /><path d="M19 5h5l-2.500 3z" fill="#eee" /></svg>
            </Tabs>
          </CadTopRight>
        </CadTop>
        <PropertiesPalette />
        <DrawColumn>
          <CadRibbon />
          <FileTabs />
          <Drawing><WireCube /></Drawing>
        </DrawColumn>
      </CadWindow>
    </Selection>
  );
}

export default function App() {
  return (
    <>
      <GlobalStyle />
      <Page>
        <PaintStrip>
          <PaintLabel $w={70}>Clipboard</PaintLabel>
          <PaintLabel $w={156}>Image</PaintLabel>
          <PaintLabel $w={48}>Tools</PaintLabel>
          <PaintLabel $w={390}>Shapes</PaintLabel>
          <PaintLabel $w={320}>Colors</PaintLabel>
        </PaintStrip>
        <Workspace>
          <Robot />
          <Cad />
        </Workspace>
      </Page>
    </>
  );
}
